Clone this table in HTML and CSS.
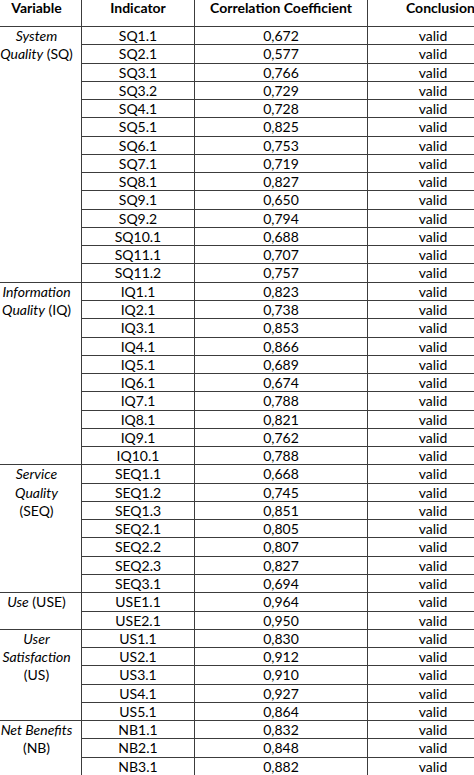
FILE: index.html
```html
<!DOCTYPE html>
<html lang="en">
<head>
<meta charset="utf-8">
<title>Validity test</title>
<link rel="stylesheet" href="styles.css">
</head>
<body>
<div class="table">
  <div class="cell head var">Variable</div>
  <div class="cell head ind">Indicator</div>
  <div class="cell head cc">Correlation Coefficient</div>
  <div class="cell head con">Conclusion</div>

  <div class="cell var span14"><i>System</i><br><i>Quality</i> (SQ)</div>
  <div class="cell ind">SQ1.1</div><div class="cell cc">0,672</div><div class="cell con">valid</div>
  <div class="cell ind">SQ2.1</div><div class="cell cc">0,577</div><div class="cell con">valid</div>
  <div class="cell ind">SQ3.1</div><div class="cell cc">0,766</div><div class="cell con">valid</div>
  <div class="cell ind">SQ3.2</div><div class="cell cc">0,729</div><div class="cell con">valid</div>
  <div class="cell ind">SQ4.1</div><div class="cell cc">0,728</div><div class="cell con">valid</div>
  <div class="cell ind">SQ5.1</div><div class="cell cc">0,825</div><div class="cell con">valid</div>
  <div class="cell ind">SQ6.1</div><div class="cell cc">0,753</div><div class="cell con">valid</div>
  <div class="cell ind">SQ7.1</div><div class="cell cc">0,719</div><div class="cell con">valid</div>
  <div class="cell ind">SQ8.1</div><div class="cell cc">0,827</div><div class="cell con">valid</div>
  <div class="cell ind">SQ9.1</div><div class="cell cc">0,650</div><div class="cell con">valid</div>
  <div class="cell ind">SQ9.2</div><div class="cell cc">0,794</div><div class="cell con">valid</div>
  <div class="cell ind">SQ10.1</div><div class="cell cc">0,688</div><div class="cell con">valid</div>
  <div class="cell ind">SQ11.1</div><div class="cell cc">0,707</div><div class="cell con">valid</div>
  <div class="cell ind">SQ11.2</div><div class="cell cc">0,757</div><div class="cell con">valid</div>

  <div class="cell var span10"><i>Information</i><br><i>Quality</i> (IQ)</div>
  <div class="cell ind">IQ1.1</div><div class="cell cc">0,823</div><div class="cell con">valid</div>
  <div class="cell ind">IQ2.1</div><div class="cell cc">0,738</div><div class="cell con">valid</div>
  <div class="cell ind">IQ3.1</div><div class="cell cc">0,853</div><div class="cell con">valid</div>
  <div class="cell ind">IQ4.1</div><div class="cell cc">0,866</div><div class="cell con">valid</div>
  <div class="cell ind">IQ5.1</div><div class="cell cc">0,689</div><div class="cell con">valid</div>
  <div class="cell ind">IQ6.1</div><div class="cell cc">0,674</div><div class="cell con">valid</div>
  <div class="cell ind">IQ7.1</div><div class="cell cc">0,788</div><div class="cell con">valid</div>
  <div class="cell ind">IQ8.1</div><div class="cell cc">0,821</div><div class="cell con">valid</div>
  <div class="cell ind">IQ9.1</div><div class="cell cc">0,762</div><div class="cell con">valid</div>
  <div class="cell ind">IQ10.1</div><div class="cell cc">0,788</div><div class="cell con">valid</div>

  <div class="cell var span7"><i>Service</i><br><i>Quality</i><br>(SEQ)</div>
  <div class="cell ind">SEQ1.1</div><div class="cell cc">0,668</div><div class="cell con">valid</div>
  <div class="cell ind">SEQ1.2</div><div class="cell cc">0,745</div><div class="cell con">valid</div>
  <div class="cell ind">SEQ1.3</div><div class="cell cc">0,851</div><div class="cell con">valid</div>
  <div class="cell ind">SEQ2.1</div><div class="cell cc">0,805</div><div class="cell con">valid</div>
  <div class="cell ind">SEQ2.2</div><div class="cell cc">0,807</div><div class="cell con">valid</div>
  <div class="cell ind">SEQ2.3</div><div class="cell cc">0,827</div><div class="cell con">valid</div>
  <div class="cell ind">SEQ3.1</div><div class="cell cc">0,694</div><div class="cell con">valid</div>

  <div class="cell var span2"><i>Use</i> (USE)</div>
  <div class="cell ind">USE1.1</div><div class="cell cc">0,964</div><div class="cell con">valid</div>
  <div class="cell ind">USE2.1</div><div class="cell cc">0,950</div><div class="cell con">valid</div>

  <div class="cell var span5"><i>User</i><br><i>Satisfaction</i><br>(US)</div>
  <div class="cell ind">US1.1</div><div class="cell cc">0,830</div><div class="cell con">valid</div>
  <div class="cell ind">US2.1</div><div class="cell cc">0,912</div><div class="cell con">valid</div>
  <div class="cell ind">US3.1</div><div class="cell cc">0,910</div><div class="cell con">valid</div>
  <div class="cell ind">US4.1</div><div class="cell cc">0,927</div><div class="cell con">valid</div>
  <div class="cell ind">US5.1</div><div class="cell cc">0,864</div><div class="cell con">valid</div>

  <div class="cell var span3"><i>Net Benefits</i><br>(NB)</div>
  <div class="cell ind">NB1.1</div><div class="cell cc">0,832</div><div class="cell con">valid</div>
  <div class="cell ind">NB2.1</div><div class="cell cc">0,848</div><div class="cell con">valid</div>
  <div class="cell ind">NB3.1</div><div class="cell cc">0,882</div><div class="cell con">valid</div>
</div>
</body>
</html>
```
FILE: styles.css
```css
html, body {
  margin: 0;
  padding: 0;
  background: #ffffff;
  overflow: hidden;
}

body {
  font-family: Lato, "Open Sans", sans-serif;
  font-size: 14px;
  color: #000000;
}

.table {
  display: grid;
  grid-template-columns: 82px 113px 173px 106px;
  grid-template-rows: 27px repeat(41, 18.28px);
  width: 474px;
}

.cell {
  box-sizing: border-box;
  border-bottom: 1px solid #3c3c3c;
  border-right: 1px solid #3c3c3c;
  text-align: center;
  white-space: nowrap;
  line-height: 17.28px;
}

.var { grid-column: 1; line-height: 18.28px; padding-right: 8px; }
.ind { grid-column: 2; }
.cc { grid-column: 3; }
.con { grid-column: 4; border-right: none; padding-left: 24px; }

.head {
  font-weight: 700;
  line-height: 16px;
}
.head.con { padding-left: 38px; }

.span14 { grid-row: span 14; }
.span10 { grid-row: span 10; }
.span7 { grid-row: span 7; }
.span5 { grid-row: span 5; }
.span3 { grid-row: span 3; }
.span2 { grid-row: span 2; }
```
